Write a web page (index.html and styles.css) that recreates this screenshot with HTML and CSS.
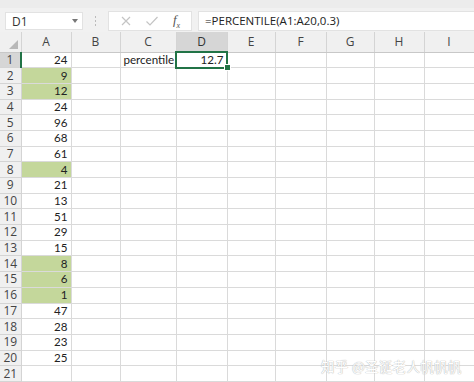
FILE: index.html
```html
<!DOCTYPE html>
<html>
<head>
<meta charset="utf-8">
<link rel="stylesheet" href="styles.css">
</head>
<body>
<div class="app">
  <div class="toolbar">
    <div class="namebox"><span>D1</span><span class="caret"></span></div>
    <div class="grip"><i></i><i></i><i></i></div>
    <div class="fbtns">
      <svg class="ic" width="12" height="12" viewBox="0 0 12 12"><path d="M2 2 L10 10 M10 2 L2 10" stroke="#c4c4c4" stroke-width="1.2" fill="none"/></svg>
      <svg class="ic" width="14" height="12" viewBox="0 0 14 12"><path d="M1.5 6.5 L5 10 L12.5 2" stroke="#c4c4c4" stroke-width="1.2" fill="none"/></svg>
      <span class="fx">f<sub>x</sub></span>
    </div>
    <div class="formula">=PERCENTILE(A1:A20,0.3)</div>
  </div>
  <table class="sheet">
    <colgroup>
      <col class="w21"><col class="w50"><col class="w49"><col class="w56"><col class="w51"><col class="w48"><col class="w51"><col class="w48"><col class="w50"><col class="w50">
    </colgroup>
    <tr class="hdr"><th class="corner"><span class="tri"></span></th><th>A</th><th>B</th><th>C</th><th class="sel">D</th><th>E</th><th>F</th><th>G</th><th>H</th><th>I</th></tr>
    <tr><th class="rsel">1</th><td class="n">24</td><td></td><td>percentile</td><td class="n active">12.7<span class="handle"></span></td><td></td><td></td><td></td><td></td><td></td></tr>
    <tr><th>2</th><td class="n g">9</td><td></td><td></td><td></td><td></td><td></td><td></td><td></td><td></td></tr>
    <tr><th>3</th><td class="n g">12</td><td></td><td></td><td></td><td></td><td></td><td></td><td></td><td></td></tr>
    <tr><th>4</th><td class="n">24</td><td></td><td></td><td></td><td></td><td></td><td></td><td></td><td></td></tr>
    <tr><th>5</th><td class="n">96</td><td></td><td></td><td></td><td></td><td></td><td></td><td></td><td></td></tr>
    <tr><th>6</th><td class="n">68</td><td></td><td></td><td></td><td></td><td></td><td></td><td></td><td></td></tr>
    <tr><th>7</th><td class="n">61</td><td></td><td></td><td></td><td></td><td></td><td></td><td></td><td></td></tr>
    <tr><th>8</th><td class="n g">4</td><td></td><td></td><td></td><td></td><td></td><td></td><td></td><td></td></tr>
    <tr><th>9</th><td class="n">21</td><td></td><td></td><td></td><td></td><td></td><td></td><td></td><td></td></tr>
    <tr><th>10</th><td class="n">13</td><td></td><td></td><td></td><td></td><td></td><td></td><td></td><td></td></tr>
    <tr><th>11</th><td class="n">51</td><td></td><td></td><td></td><td></td><td></td><td></td><td></td><td></td></tr>
    <tr><th>12</th><td class="n">29</td><td></td><td></td><td></td><td></td><td></td><td></td><td></td><td></td></tr>
    <tr><th>13</th><td class="n">15</td><td></td><td></td><td></td><td></td><td></td><td></td><td></td><td></td></tr>
    <tr><th>14</th><td class="n g">8</td><td></td><td></td><td></td><td></td><td></td><td></td><td></td><td></td></tr>
    <tr><th>15</th><td class="n g">6</td><td></td><td></td><td></td><td></td><td></td><td></td><td></td><td></td></tr>
    <tr><th>16</th><td class="n g">1</td><td></td><td></td><td></td><td></td><td></td><td></td><td></td><td></td></tr>
    <tr><th>17</th><td class="n">47</td><td></td><td></td><td></td><td></td><td></td><td></td><td></td><td></td></tr>
    <tr><th>18</th><td class="n">28</td><td></td><td></td><td></td><td></td><td></td><td></td><td></td><td></td></tr>
    <tr><th>19</th><td class="n">23</td><td></td><td></td><td></td><td></td><td></td><td></td><td></td><td></td></tr>
    <tr><th>20</th><td class="n">25</td><td></td><td></td><td></td><td></td><td></td><td></td><td></td><td></td></tr>
    <tr><th>21</th><td></td><td></td><td></td><td></td><td></td><td></td><td></td><td></td><td></td></tr>
  </table>
  <div class="watermark">知乎 @圣诞老人帆帆帆</div>
</div>
</body>
</html>
```
FILE: styles.css
```css
html,body{margin:0;padding:0;background:#fff;}
body{font-family:"Open Sans","Liberation Sans",sans-serif;width:474px;height:382px;overflow:hidden;}
.app{position:relative;width:474px;height:382px;overflow:hidden;}
.toolbar{height:32px;background:#f1f1f1;display:flex;align-items:center;padding:2px 0 0 5px;box-sizing:border-box;border-top:8px solid #ececec;}
.namebox{width:78px;height:18px;background:#fff;border:1px solid #e2e2e2;box-sizing:border-box;display:flex;align-items:center;justify-content:space-between;padding:0 4px 0 6px;font-size:12px;color:#333;}
.caret{width:0;height:0;border-left:3px solid transparent;border-right:3px solid transparent;border-top:4px solid #777;}
.grip{width:25px;display:flex;flex-direction:column;align-items:center;gap:2px;}
.grip i{display:block;width:1px;height:2px;background:#bbb;}
.fbtns{width:84px;height:20px;background:#fff;border:1px solid #e2e2e2;box-sizing:border-box;display:flex;align-items:center;justify-content:space-around;padding:0 4px;}
.fx{font-family:"Liberation Serif",serif;font-style:italic;font-size:13px;color:#555;line-height:1;}
.fx sub{font-size:8px;}
.formula{flex:1;height:20px;margin-left:6px;background:#fff;border:1px solid #e2e2e2;border-right:none;box-sizing:border-box;font-size:11.5px;color:#222;line-height:18px;padding-left:6px;}
.sheet{border-collapse:collapse;table-layout:fixed;width:474px;font-size:12px;}
.w21{width:21px}.w50{width:50px}.w49{width:49px}.w56{width:56px}.w51{width:51px}.w48{width:48px}
.sheet tr{height:15.7px;}
.sheet tr.hdr{height:20px;}
.sheet th{background:#f0f0f0;color:#444;font-weight:normal;font-size:12px;padding:0;line-height:14px;border:1px solid #d4d4d4;border-top:none;}
.sheet tr th:first-child{border-left:none;}
.sheet tr.hdr th{border-bottom:1px solid #c8c8c8;}
.sheet tr.hdr th.sel{background:#d6d6d6;border-bottom:2px solid #217346;color:#333;}
.sheet th.rsel{background:#d6d6d6;border-right:2px solid #217346;}
.corner{position:relative;}
.tri{position:absolute;right:3px;bottom:3px;width:0;height:0;border-left:9px solid transparent;border-bottom:9px solid #b8b8b8;}
.sheet td{border:1px solid #dadada;font-family:Lato,"Open Sans",sans-serif;font-size:11.6px;color:#222;line-height:14px;padding:0 3px;white-space:nowrap;overflow:visible;position:relative;}
.sheet td.n{text-align:right;}
.sheet td.g{background:#c4d79b;}
.sheet td.active{outline:2px solid #217346;outline-offset:-1px;}
.handle{position:absolute;right:-4px;bottom:-4px;width:5px;height:5px;background:#217346;border:1px solid #fff;z-index:2;}
.watermark{position:absolute;left:321px;top:356px;font-size:13.5px;color:#fff;font-family:"Noto Sans CJK SC",sans-serif;text-shadow:0 0 1px #b8b8b8,0 0 1px #b8b8b8;letter-spacing:0.3px;}
```
